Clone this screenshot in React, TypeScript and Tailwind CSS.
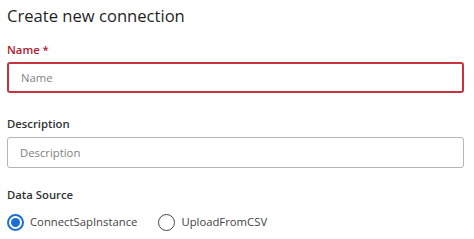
import React, { useState } from "react";

const App: React.FC = () => {
  const [source, setSource] = useState<string>("sap");

  return (
    <div
      className="w-[474px] h-[239px] bg-white px-[7px] pt-[4px] text-[#333]"
      style={{ fontFamily: '"Open Sans", "Noto Sans", sans-serif' }}
    >
      <h2 className="text-[16.6px] leading-[24px] font-medium text-[#1f1f1f]">
        Create new connection
      </h2>

      <label className="block mt-[14px] text-[11.3px] leading-[16px] font-semibold text-[#b3172c]">
        Name *
      </label>
      <input
        className="mt-[4px] block w-[457px] h-[31px] px-[12px] text-[11.3px] bg-white border-2 border-[#c8323f] rounded-[3px] outline-none placeholder:text-[#808080]"
        type="text"
        placeholder="Name"
      />

      <label className="block mt-[23px] text-[11.3px] leading-[16px] font-semibold text-[#333]">
        Description
      </label>
      <input
        className="mt-[5px] block w-[457px] h-[31px] px-[12px] text-[11.3px] bg-white border border-[#b5b5b5] rounded-[3px] outline-none placeholder:text-[#808080]"
        type="text"
        placeholder="Description"
      />

      <label className="block mt-[19px] text-[11.3px] leading-[16px] font-semibold text-[#333]">
        Data Source
      </label>
      <div className="mt-[11px] flex items-center gap-[21px] text-[11.3px] text-[#444]">
        <button
          className="flex items-center gap-[6px]"
          onClick={() => setSource("sap")}
        >
          <span
            className={
              source === "sap"
                ? "w-[17px] h-[17px] rounded-full border-2 border-[#1a6fd6] flex items-center justify-center"
                : "w-[17px] h-[17px] rounded-full border-[1.5px] border-[#444] flex items-center justify-center"
            }
          >
            {source === "sap" && (
              <span className="w-[9px] h-[9px] rounded-full bg-[#1a6fd6]" />
            )}
          </span>
          ConnectSapInstance
        </button>
        <button
          className="flex items-center gap-[6px]"
          onClick={() => setSource("csv")}
        >
          <span
            className={
              source === "csv"
                ? "w-[17px] h-[17px] rounded-full border-2 border-[#1a6fd6] flex items-center justify-center"
                : "w-[17px] h-[17px] rounded-full border-[1.5px] border-[#444] flex items-center justify-center"
            }
          >
            {source === "csv" && (
              <span className="w-[9px] h-[9px] rounded-full bg-[#1a6fd6]" />
            )}
          </span>
          UploadFromCSV
        </button>
      </div>
    </div>
  );
};

export default App;
